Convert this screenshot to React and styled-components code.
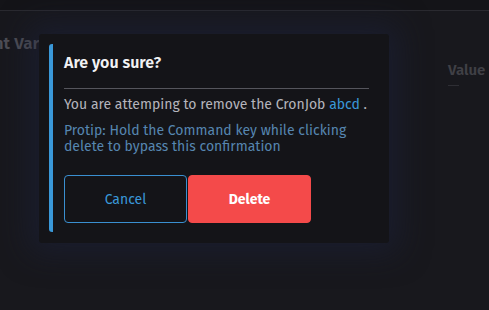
import React from 'react';
import styled, { createGlobalStyle } from 'styled-components';

const Global = createGlobalStyle`
  html, body { margin: 0; padding: 0; background: #18181d; }
  body { font-family: "Fira Sans", Lato, "Noto Sans", sans-serif; }
  * { box-sizing: border-box; }
`;

export default function App() {
  return (
    <Page>
      <Global />
      <TopBar />
      <Content>
        <SectionTitle>Environment Variables</SectionTitle>
        <ColHead>
          <span>Value</span>
          <Underline />
        </ColHead>
      </Content>
      <Modal>
        <Accent />
        <Body>
          <Title>Are you sure?</Title>
          <Divider />
          <Text>
            You are attemping to remove the CronJob <Name>abcd</Name> .
          </Text>
          <Protip>Protip: Hold the Command key while clicking delete to bypass this confirmation</Protip>
          <Actions>
            <Button>Cancel</Button>
            <Button danger>Delete</Button>
          </Actions>
        </Body>
      </Modal>
    </Page>
  );
}

const Page = styled.div`
  position: relative;
  width: 489px;
  height: 310px;
  overflow: hidden;
  background: #18181d;
`;

const TopBar = styled.div`
  height: 11px;
  background: #141418;
  border-bottom: 1px solid #2a2a30;
`;

const Content = styled.div`
  display: flex;
  justify-content: space-between;
  padding-top: 22px;
`;

const SectionTitle = styled.h2`
  margin: 0 0 0 -88px;
  font-size: 17px;
  font-weight: 600;
  color: #4e4e55;
  white-space: nowrap;
`;

const ColHead = styled.div`
  margin-top: 28px;
  width: 41px;
  font-size: 15px;
  font-weight: 600;
  color: #404046;
`;

const Underline = styled.div`
  margin-top: 6px;
  width: 11px;
  height: 1px;
  background: #2e2e34;
`;

const Modal = styled.div`
  position: absolute;
  left: 39px;
  top: 34px;
  width: 350px;
  height: 209px;
  padding: 10px 20px 11px 10px;
  display: flex;
  background: #141418;
  border-radius: 3px;
  box-shadow: 0 0 30px 10px rgba(28, 32, 58, 0.55);
`;

const Accent = styled.div`
  width: 4px;
  background: #3a98d8;
  border-radius: 3px 0 0 3px;
`;

const Body = styled.div`
  flex: 1;
  padding-left: 11px;
`;

const Title = styled.h3`
  margin: 0;
  padding-top: 9px;
  height: 44px;
  font-size: 16px;
  font-weight: 600;
  color: #f2f2f4;
`;

const Divider = styled.div`
  height: 1px;
  background: #55555c;
`;

const Text = styled.p`
  margin: 8px 0 0;
  font-size: 14px;
  line-height: 16px;
  color: #b4b4bc;
`;

const Name = styled.span`
  color: #3a98d8;
`;

const Protip = styled.p`
  margin: 10px 0 0;
  font-size: 14px;
  line-height: 16px;
  color: #5686b0;
`;

const Actions = styled.div`
  display: flex;
  margin-top: 20px;
`;

const Button = styled.button`
  width: 123px;
  height: 48px;
  font-family: inherit;
  font-size: 14px;
  font-weight: ${p => (p.danger ? 700 : 400)};
  color: ${p => (p.danger ? '#ffffff' : '#3a98d8')};
  background: ${p => (p.danger ? '#f44a4a' : 'transparent')};
  border: 1px solid ${p => (p.danger ? '#f44a4a' : '#3a8fd0')};
  border-radius: 4px;
  margin-left: ${p => (p.danger ? '1px' : '0')};
`;
